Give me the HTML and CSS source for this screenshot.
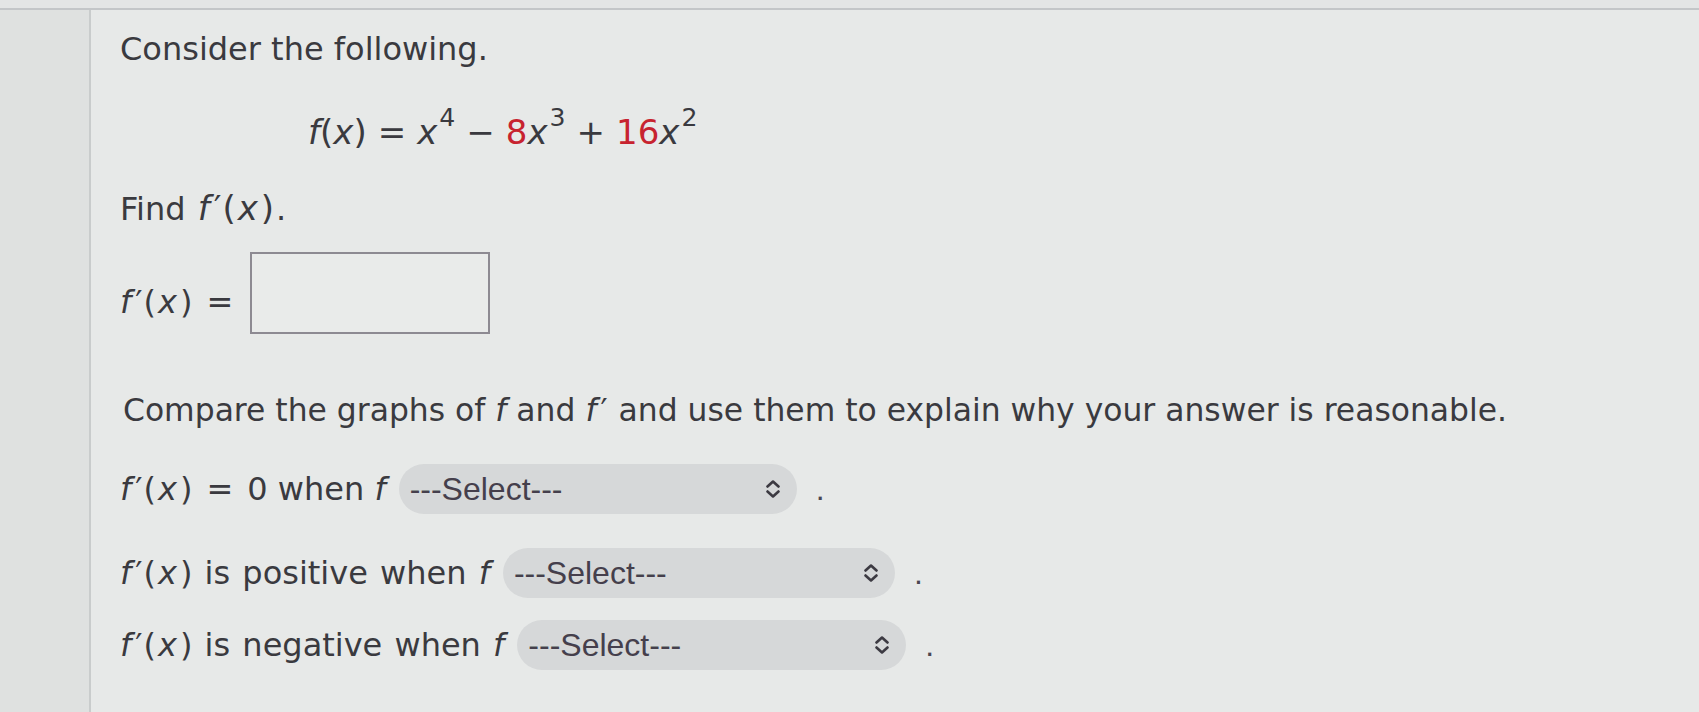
FILE: index.html
```html
<!DOCTYPE html>
<html lang="en">
<head>
<meta charset="utf-8">
<title>Derivative question</title>
<link rel="stylesheet" href="styles.css">
</head>
<body>
<div class="topband"></div>
<div class="page">
  <div class="sidebar"></div>
  <main class="content">
    <p class="line intro">Consider the following.</p>
    <p class="line equation"><i>f</i>(<i>x</i>)<span class="op">=</span><i>x</i><sup>4</sup><span class="op">−</span><span class="red">8</span><i>x</i><sup>3</sup><span class="op">+</span><span class="red">16</span><i>x</i><sup>2</sup></p>
    <p class="line find">Find <span class="fm"><i>f</i><span class="pr">′</span>(<i class="mx">x</i>)</span>.</p>
    <div class="answer-row">
      <span class="line label"><i>f</i><span class="pr">′</span>(<i class="mx">x</i>)<span class="eq">=</span></span>
      <div class="answer-box"></div>
    </div>
    <p class="line compare">Compare the graphs of <i>f</i> and <i>f</i><span class="pr">′</span> and use them to explain why your answer is reasonable.</p>
    <div class="select-row r1">
      <span class="line"><i>f</i><span class="pr">′</span>(<i class="mx">x</i>)<span class="eq">=</span>0 when <i>f</i></span>
      <div class="select w1"><span>---Select---</span>
        <svg class="chev" viewBox="0 0 14 22" width="14" height="22"><path d="M1.5 8.5 L7 3.5 L12.5 8.5 M1.5 13.5 L7 18.5 L12.5 13.5" fill="none" stroke="#3c3a42" stroke-width="2.6" stroke-linecap="round" stroke-linejoin="round"/></svg>
      </div>
      <span class="dot">.</span>
    </div>
    <div class="select-row r2">
      <span class="line"><i>f</i><span class="pr">′</span>(<i class="mx">x</i>) is positive when <i>f</i></span>
      <div class="select w2"><span>---Select---</span>
        <svg class="chev" viewBox="0 0 14 22" width="14" height="22"><path d="M1.5 8.5 L7 3.5 L12.5 8.5 M1.5 13.5 L7 18.5 L12.5 13.5" fill="none" stroke="#3c3a42" stroke-width="2.6" stroke-linecap="round" stroke-linejoin="round"/></svg>
      </div>
      <span class="dot">.</span>
    </div>
    <div class="select-row r3">
      <span class="line"><i>f</i><span class="pr">′</span>(<i class="mx">x</i>) is negative when <i>f</i></span>
      <div class="select w3"><span>---Select---</span>
        <svg class="chev" viewBox="0 0 14 22" width="14" height="22"><path d="M1.5 8.5 L7 3.5 L12.5 8.5 M1.5 13.5 L7 18.5 L12.5 13.5" fill="none" stroke="#3c3a42" stroke-width="2.6" stroke-linecap="round" stroke-linejoin="round"/></svg>
      </div>
      <span class="dot">.</span>
    </div>
  </main>
</div>
</body>
</html>
```
FILE: styles.css
```css
html, body {
  margin: 0;
  padding: 0;
  height: 100%;
  overflow: hidden;
}
body {
  background: #e7e9e8;
  font-family: "DejaVu Sans", Verdana, sans-serif;
  color: #3a3a3f;
}
.topband {
  height: 8px;
  background: #e3e5e5;
  border-bottom: 2px solid #c3c6c8;
}
.page {
  display: flex;
  height: 702px;
}
.sidebar {
  width: 89px;
  background: #dfe1e0;
  border-right: 2px solid #c9cccc;
}
.content {
  flex: 1;
  padding-left: 29px;
  padding-top: 19px;
}
.line {
  margin: 0;
  font-size: 32px;
  line-height: 40px;
  white-space: nowrap;
}
i {
  font-style: italic;
}
.mx {
  margin: 0 3px 0 2px;
}
.pr {
  margin-left: 4px;
  margin-right: 1px;
  font-style: normal;
}
.eq {
  margin: 0 14px 0 14px;
}
.equation {
  margin-top: 43px;
  margin-left: 188px;
  font-size: 34px;
}
.op {
  margin: 0 11px;
}
sup {
  font-size: 0.74em;
  line-height: 0;
  vertical-align: 0.72em;
  margin-left: 2px;
}
.red {
  color: #c7232f;
}
.find {
  margin-top: 36px;
}
.fm {
  font-size: 34px;
  margin-left: 2px;
  margin-right: 2px;
}
.answer-row {
  display: flex;
  align-items: flex-end;
  margin-top: 23px;
  gap: 0;
}
.label {
  margin-bottom: 12px;
}
.label .eq {
  margin-right: 17px;
}
.answer-box {
  width: 236px;
  height: 78px;
  border: 2px solid #8d8a92;
  background: #e9ebea;
}
.compare {
  margin-top: 56px;
  margin-left: 3px;
  font-size: 31.4px;
}
.select-row {
  display: flex;
  align-items: center;
  gap: 13px;
}
.r1 { margin-top: 34px; }
.r2 { margin-top: 34px; }
.r3 { margin-top: 22px; }
.r2 .line, .r3 .line {
  word-spacing: 2px;
}
.select {
  height: 50px;
  border-radius: 25px;
  background: #d6d8d9;
  display: flex;
  align-items: center;
  justify-content: space-between;
  padding: 0 17px 0 11px;
  box-sizing: border-box;
  font-family: "Liberation Sans", Arial, sans-serif;
  font-size: 32px;
  color: #453f4c;
  word-spacing: 0;
}
.w1 { width: 398px; }
.w2 { width: 392px; }
.w3 { width: 389px; }
.dot {
  font-family: "Liberation Sans", Arial, sans-serif;
  font-size: 32px;
  color: #4a4650;
  margin-left: 6px;
}
```
